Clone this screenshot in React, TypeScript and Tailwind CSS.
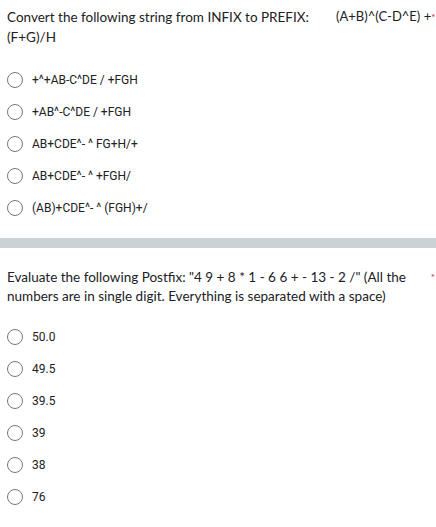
const q1Options = [
  "+^+AB-C^DE / +FGH",
  "+AB^-C^DE / +FGH",
  "AB+CDE^- ^ FG+H/+",
  "AB+CDE^- ^ +FGH/",
  "(AB)+CDE^- ^ (FGH)+/",
];

const q2Options = ["50.0", "49.5", "39.5", "39", "38", "76"];

function Radio({ label }: { label: string }) {
  return (
    <div className="flex h-8 items-center">
      <span className="ml-[7px] h-4 w-4 shrink-0 rounded-full border-[1.5px] border-[#74777b]" />
      <span className="ml-[9px] text-[12px] leading-none text-[#202124] [font-family:Roboto,sans-serif]">
        {label}
      </span>
    </div>
  );
}

export default function App() {
  return (
    <div className="h-[527px] w-[436px] overflow-hidden bg-white text-[#202124] [font-family:Lato,sans-serif]">
      <div className="pt-[7px]">
        <div className="flex h-[20px] items-center whitespace-nowrap pl-[7px] text-[13.5px]">
          <span className="w-[329px] shrink-0">Convert the following string from INFIX to PREFIX:</span>
          <span className="shrink-0 text-[13px]">(A+B)^(C-D^E) +</span>
          <span className="ml-auto pr-[1px] text-[10px] text-[#d93025]">*</span>
        </div>
        <div className="flex h-[20px] items-center pl-[7px] text-[13.5px]">(F+G)/H</div>
      </div>
      <div className="mt-[17px]">
        {q1Options.map((o) => (
          <Radio key={o} label={o} />
        ))}
      </div>
      <div className="mt-[14px] h-[10px] bg-[#cbd2d6]" />
      <div className="flex pt-[20px]">
        <p className="w-[412px] pl-[7px] text-[13.5px] leading-[19px]">
          Evaluate the following Postfix: "4 9 + 8 * 1 - 6 6 + - 13 - 2 /" (All the numbers are in single digit. Everything is separated with a space)
        </p>
        <span className="ml-auto pr-[1px] text-[10px] leading-[19px] text-[#d93025]">*</span>
      </div>
      <div className="mt-[15px]">
        {q2Options.map((o) => (
          <Radio key={o} label={o} />
        ))}
      </div>
    </div>
  );
}
